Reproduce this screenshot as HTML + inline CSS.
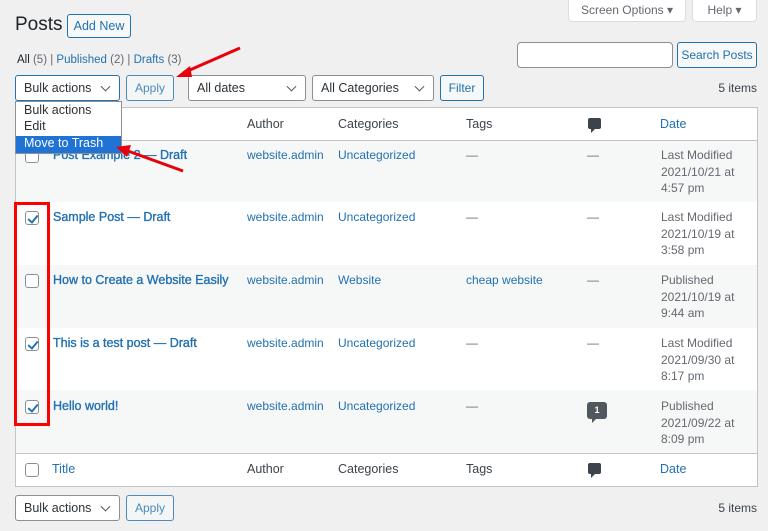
<!DOCTYPE html>
<html><head><meta charset="utf-8"><style>
*{box-sizing:border-box;margin:0;padding:0}
body{width:768px;height:531px;background:#f0f0f1;font-family:"Liberation Sans",sans-serif;color:#3c434a;position:relative;overflow:hidden;font-size:12px}
.a{position:absolute;white-space:nowrap}
.btn{position:absolute;border:1px solid #2271b1;color:#2271b1;background:#f6f7f7;border-radius:3px;font-size:12px;display:flex;align-items:center;justify-content:center}
.sel{position:absolute;border:1px solid #8c8f94;background:#fff;border-radius:3px;font-size:12.5px;color:#2c3338;padding-left:8px;display:flex;align-items:center}
.sel::after{content:"";position:absolute;right:10px;top:50%;width:6px;height:6px;border-right:1.5px solid #50575e;border-bottom:1.5px solid #50575e;transform:translateY(-70%) rotate(45deg)}
.link{color:#2271b1}
.row{position:absolute;left:16px;width:741px}
.cb{position:absolute;left:25px;width:14px;height:14px;border:1px solid #8c8f94;border-radius:3px;background:#fff}
.cb.c::after{content:"";position:absolute;left:4px;top:1px;width:4px;height:8px;border-right:2px solid #2271b1;border-bottom:2px solid #2271b1;transform:rotate(40deg)}
.t{font-size:12.5px;color:#2271b1;-webkit-text-stroke:0.35px #2271b1}
.d{font-size:12px;color:#646970;line-height:16.5px}
.bub{position:absolute;width:13px;height:11px;background:#3c434a;border-radius:2px}
.bub::after{content:"";position:absolute;left:3px;bottom:-4px;border-left:4px solid #3c434a;border-bottom:4px solid transparent}
</style></head><body>
<div class="a" style="left:15px;top:14px;font-size:19px;color:#1d2327">Posts</div>
<div class="btn" style="left:67px;top:14px;width:64px;height:24px;font-size:12.5px">Add New</div>
<div class="a" style="left:568px;top:-2px;width:118px;height:24px;background:#fff;border:1px solid #dcdcde;border-radius:0 0 4px 4px;display:flex;align-items:center;justify-content:center;color:#646970">Screen Options ▾</div>
<div class="a" style="left:692px;top:-2px;width:65px;height:24px;background:#fff;border:1px solid #dcdcde;border-radius:0 0 4px 4px;display:flex;align-items:center;justify-content:center;color:#646970">Help ▾</div>
<div class="a" style="left:17px;top:54px;font-size:11.5px;color:#646970"><span style="color:#1d2327">All</span> (5) | <span class="link">Published</span> (2) | <span class="link">Drafts</span> (3)</div>
<div class="a" style="left:517px;top:42px;width:156px;height:26px;background:#fff;border:1px solid #8c8f94;border-radius:4px"></div>
<div class="btn" style="left:677px;top:42px;width:80px;height:26px">Search Posts</div>
<div class="sel" style="left:15px;top:75px;width:105px;height:26px;border-color:#2271b1">Bulk actions</div>
<div class="btn" style="left:126px;top:75px;width:48px;height:26px;opacity:.8">Apply</div>
<div class="sel" style="left:188px;top:75px;width:118px;height:26px">All dates</div>
<div class="sel" style="left:312px;top:75px;width:122px;height:26px">All Categories</div>
<div class="btn" style="left:440px;top:75px;width:44px;height:26px">Filter</div>
<div class="a" style="right:11px;top:81px;font-size:12px">5 items</div>

<div class="a" style="left:15px;top:107px;width:743px;height:380px;background:#fff;border:1px solid #c3c4c7"></div>
<div class="row" style="top:140px;height:1px;background:#c3c4c7"></div>
<div class="row" style="top:141px;height:61px;background:#f6f7f7"></div>
<div class="row" style="top:265px;height:63px;background:#f6f7f7"></div>
<div class="row" style="top:390px;height:63px;background:#f6f7f7"></div>
<div class="row" style="top:453px;height:1px;background:#c3c4c7"></div>

<div class="a" style="left:247px;top:117px;font-size:12.5px">Author</div>
<div class="a" style="left:338px;top:117px;font-size:12.5px">Categories</div>
<div class="a" style="left:466px;top:117px;font-size:12.5px">Tags</div>
<div class="bub" style="left:588px;top:118px"></div>
<div class="a link" style="left:660px;top:117px;font-size:12.5px">Date</div>

<div class="cb" style="top:149px"></div>
<div class="a t" style="left:53px;top:148px">Post Example 2 — Draft</div>
<div class="a d link" style="left:247px;top:147px;color:#2271b1">website.admin</div>
<div class="a d" style="left:338px;top:147px;color:#2271b1">Uncategorized</div>
<div class="a d" style="left:466px;top:147px">—</div><div class="a d" style="left:587px;top:147px">—</div>
<div class="a d" style="left:661px;top:147px">Last Modified<br>2021/10/21 at<br>4:57 pm</div>

<div class="cb c" style="top:211px"></div>
<div class="a t" style="left:53px;top:210px">Sample Post — Draft</div>
<div class="a d" style="left:247px;top:209px;color:#2271b1">website.admin</div>
<div class="a d" style="left:338px;top:209px;color:#2271b1">Uncategorized</div>
<div class="a d" style="left:466px;top:209px">—</div><div class="a d" style="left:587px;top:209px">—</div>
<div class="a d" style="left:661px;top:209px">Last Modified<br>2021/10/19 at<br>3:58 pm</div>

<div class="cb" style="top:274px"></div>
<div class="a t" style="left:53px;top:273px">How to Create a Website Easily</div>
<div class="a d" style="left:247px;top:272px;color:#2271b1">website.admin</div>
<div class="a d" style="left:338px;top:272px;color:#2271b1">Website</div>
<div class="a d" style="left:466px;top:272px;color:#2271b1">cheap website</div><div class="a d" style="left:587px;top:272px">—</div>
<div class="a d" style="left:661px;top:272px">Published<br>2021/10/19 at<br>9:44 am</div>

<div class="cb c" style="top:337px"></div>
<div class="a t" style="left:53px;top:336px">This is a test post — Draft</div>
<div class="a d" style="left:247px;top:335px;color:#2271b1">website.admin</div>
<div class="a d" style="left:338px;top:335px;color:#2271b1">Uncategorized</div>
<div class="a d" style="left:466px;top:335px">—</div><div class="a d" style="left:587px;top:335px">—</div>
<div class="a d" style="left:661px;top:335px">Last Modified<br>2021/09/30 at<br>8:17 pm</div>

<div class="cb c" style="top:400px"></div>
<div class="a t" style="left:53px;top:399px">Hello world!</div>
<div class="a d" style="left:247px;top:398px;color:#2271b1">website.admin</div>
<div class="a d" style="left:338px;top:398px;color:#2271b1">Uncategorized</div>
<div class="a d" style="left:466px;top:398px">—</div>
<div class="a" style="left:587px;top:402px;width:20px;height:17px;background:#50575e;border-radius:3px;color:#fff;font-size:9px;font-weight:bold;text-align:center;line-height:17px">1</div>
<div class="a" style="left:592px;top:418px;border-left:5px solid #50575e;border-bottom:5px solid transparent"></div>
<div class="a d" style="left:661px;top:398px">Published<br>2021/09/22 at<br>8:09 pm</div>

<div class="cb" style="top:463px"></div>
<div class="a link" style="left:52px;top:462px;font-size:12.5px">Title</div>
<div class="a" style="left:247px;top:462px;font-size:12.5px">Author</div>
<div class="a" style="left:338px;top:462px;font-size:12.5px">Categories</div>
<div class="a" style="left:466px;top:462px;font-size:12.5px">Tags</div>
<div class="bub" style="left:588px;top:463px"></div>
<div class="a link" style="left:660px;top:462px;font-size:12.5px">Date</div>

<div class="sel" style="left:15px;top:495px;width:105px;height:26px">Bulk actions</div>
<div class="btn" style="left:126px;top:495px;width:48px;height:26px;opacity:.8">Apply</div>
<div class="a" style="right:11px;top:501px;font-size:12px">5 items</div>

<div class="a" style="left:15px;top:101px;width:107px;height:53px;background:#fff;border:1px solid #8c8f94;font-size:12.5px;color:#2c3338">
<div style="padding:1px 0 0 8px;height:17px">Bulk actions</div>
<div style="padding:0 0 0 8px;height:17px">Edit</div>
<div style="padding:0 0 0 8px;height:17px;background:#1e73d4;color:#fff">Move to Trash</div>
</div>

<div class="a" style="left:14px;top:202px;width:36px;height:224px;border:3px solid #f00"></div>
<svg class="a" style="left:0;top:0" width="768" height="531">
<line x1="240" y1="48" x2="183" y2="73" stroke="#e8000b" stroke-width="3"/>
<polygon points="176,77 190,66 192,77" fill="#e8000b"/>
<line x1="183" y1="171" x2="128" y2="151" stroke="#e8000b" stroke-width="3"/>
<polygon points="116,147 131,145 127,157" fill="#e8000b"/>
</svg>
</body></html>
